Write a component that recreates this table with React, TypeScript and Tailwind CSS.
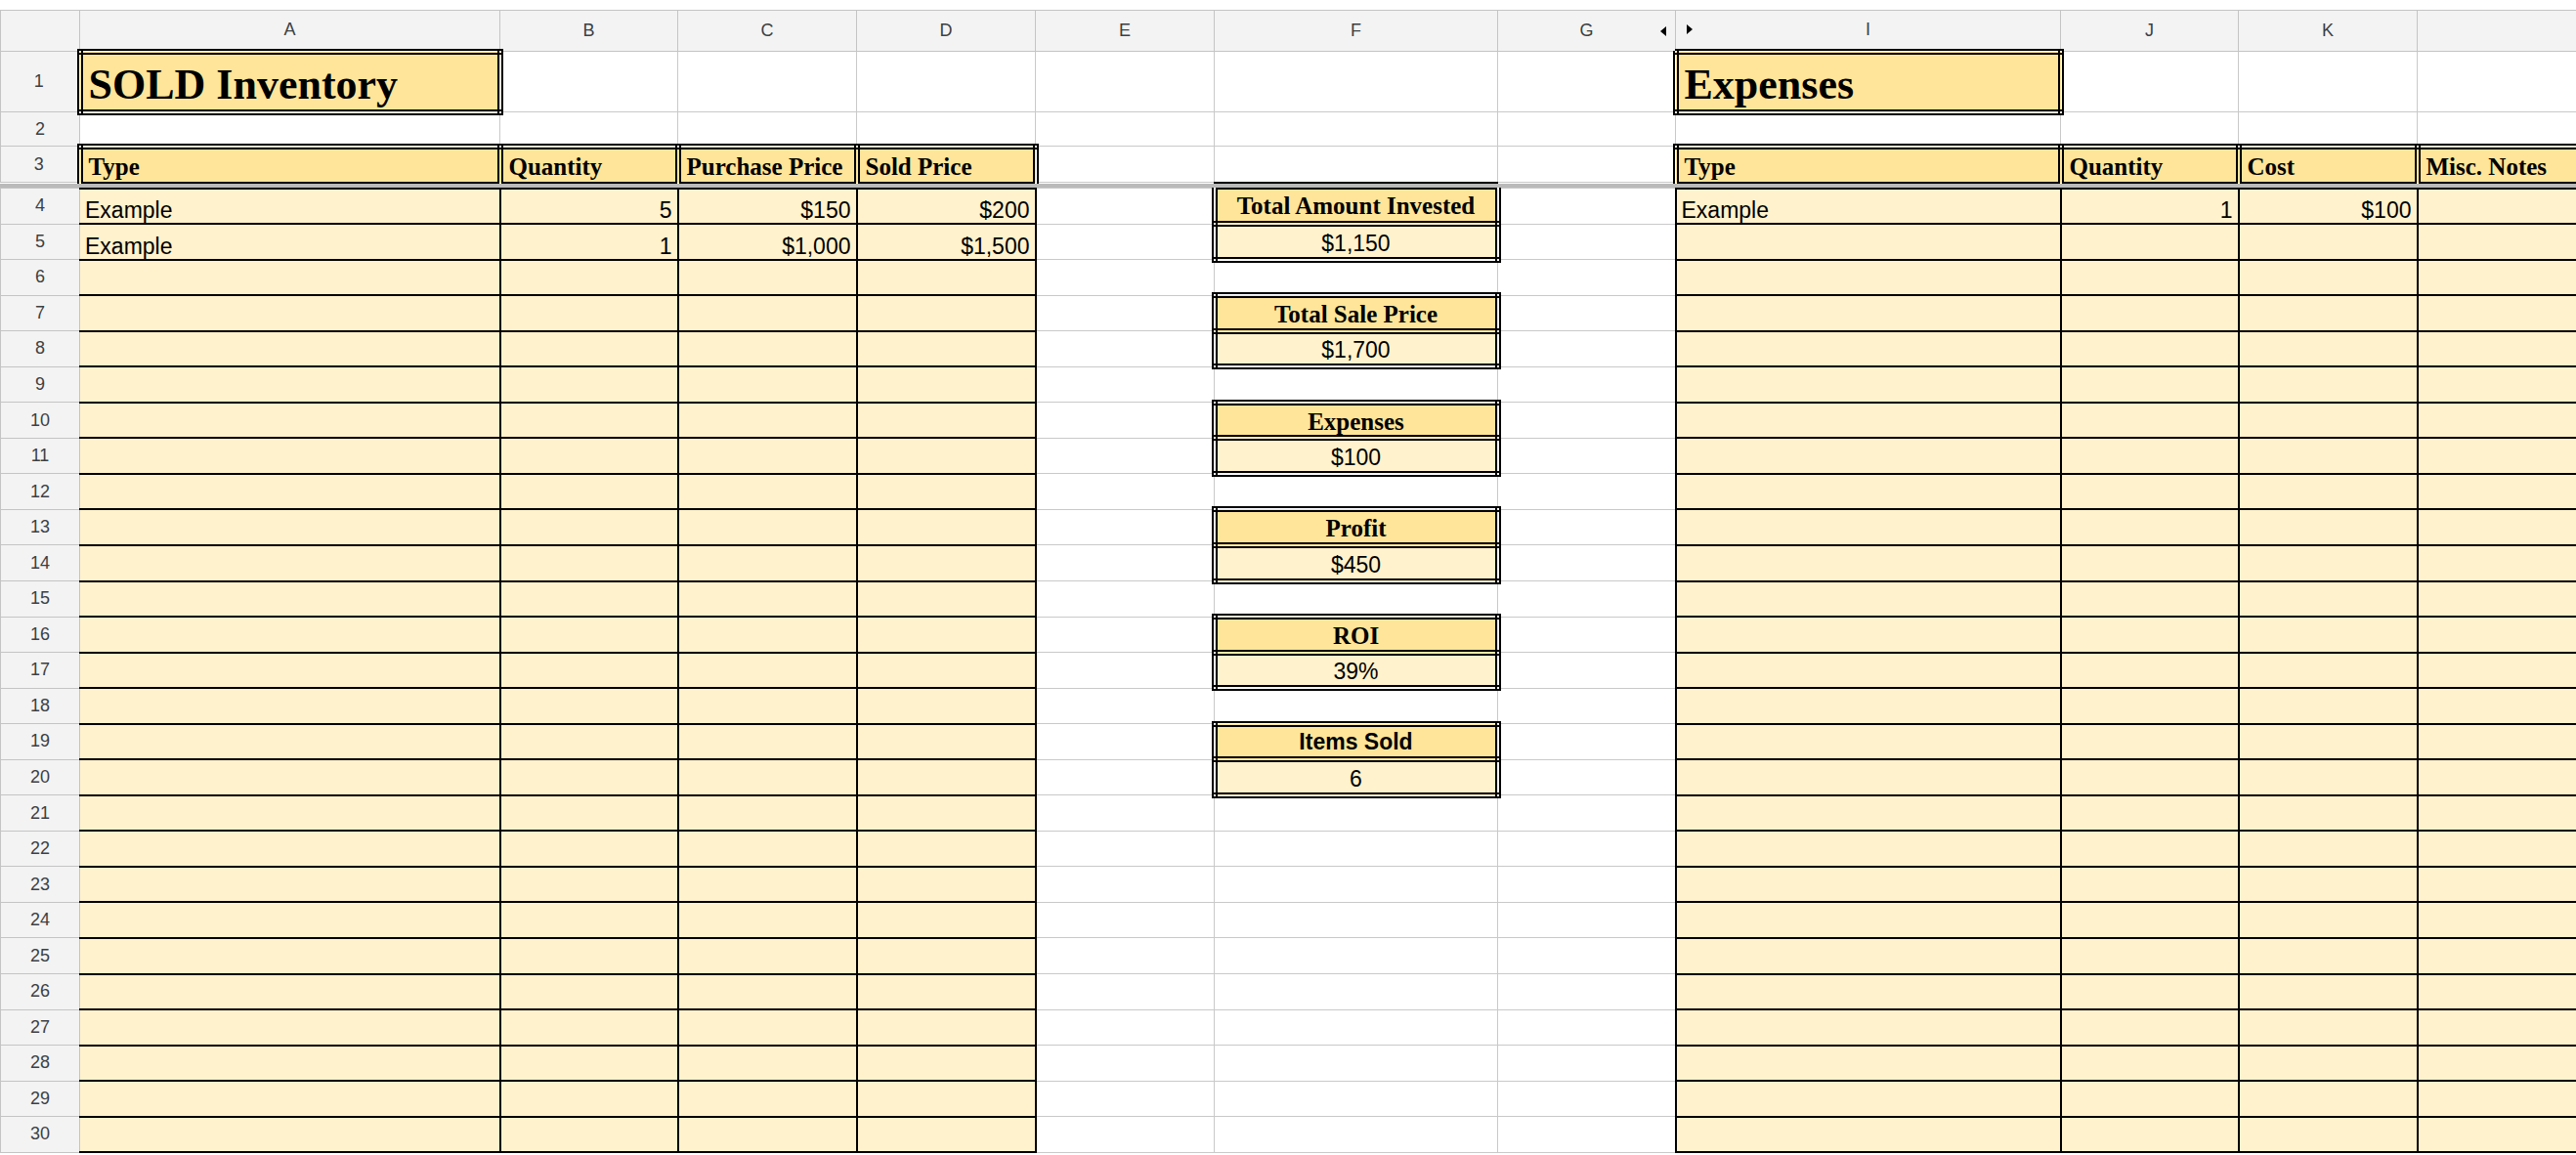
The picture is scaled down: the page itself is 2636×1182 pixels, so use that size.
import React from "react";

const serifBold = "font-['Liberation_Serif','Times_New_Roman',serif] font-bold";
const grid = "border border-[#c9c9c9] bg-white p-0";
const hdrCell =
  "border border-[#c4c4c4] bg-[#f3f3f3] p-0 text-center align-middle text-[18px] font-normal text-[#3c4043]";
const dbl = "border-[6px] border-double border-black";
const titleCell = `${dbl} bg-[#ffe599] pl-[6px] pb-[3px] align-bottom text-left text-[44px] leading-none text-black ${serifBold}`;
const headCell = `${dbl} border-b-2 [border-bottom-style:solid]! bg-[#ffe599] pl-[6px] pb-[3px] align-bottom text-left text-[25px] leading-none text-black ${serifBold}`;
const dataCell =
  "border-2 border-black bg-[#fff2cc] px-[5px] pb-[1px] align-bottom text-[23px] leading-none text-black";

type Row = { a?: string; b?: string; c?: string; d?: string; i?: string; j?: string; k?: string };

const inventory: Record<number, Row> = {
  4: { a: "Example", b: "5", c: "$150", d: "$200", i: "Example", j: "1", k: "$100" },
  5: { a: "Example", b: "1", c: "$1,000", d: "$1,500" },
};

const stats = [
  { row: 4, label: "Total Amount Invested", value: "$1,150" },
  { row: 7, label: "Total Sale Price", value: "$1,700" },
  { row: 10, label: "Expenses", value: "$100" },
  { row: 13, label: "Profit", value: "$450" },
  { row: 16, label: "ROI", value: "39%" },
  { row: 19, label: "Items Sold", value: "6", sans: true },
];

const rows = Array.from({ length: 27 }, (_, i) => i + 4);

function Cols() {
  return (
    <colgroup>
      <col className="w-[81px]" />
      <col className="w-[430px]" />
      <col className="w-[182px]" />
      <col className="w-[183px]" />
      <col className="w-[183px]" />
      <col className="w-[183px]" />
      <col className="w-[290px]" />
      <col className="w-[182px]" />
      <col className="w-[394px]" />
      <col className="w-[182px]" />
      <col className="w-[183px]" />
      <col className="w-[400px]" />
    </colgroup>
  );
}

function StatCell({ r }: { r: number }) {
  const label = stats.find((s) => s.row === r);
  const value = stats.find((s) => s.row + 1 === r);
  if (label) {
    return (
      <td
        className={`${dbl} ${r === 4 ? "border-t-2 [border-top-style:solid]!" : ""} bg-[#ffe599] p-0 pt-[2px] text-center align-middle leading-none text-black ${
          label.sans ? "text-[23px] font-bold" : `text-[25px] ${serifBold}`
        }`}
      >
        {label.label}
      </td>
    );
  }
  if (value) {
    return (
      <td className={`${dbl} bg-[#fff2cc] p-0 pt-[4px] text-center align-middle text-[23px] leading-none text-black`}>
        {value.value}
      </td>
    );
  }
  return <td className={grid} />;
}

export default function App() {
  return (
    <div className="h-[1182px] w-[2636px] overflow-hidden bg-white pt-[10px] font-['Liberation_Sans',Arial,sans-serif]">
      <table className="w-[2873px] table-fixed border-collapse">
        <Cols />
        <tbody>
          <tr className="h-[42px]">
            <th className={hdrCell} />
            {["A", "B", "C", "D", "E", "F"].map((c) => (
              <th key={c} className={hdrCell}>
                {c}
              </th>
            ))}
            <th className={`${hdrCell} relative`}>
              G
              <span className="absolute right-[9px] top-1/2 -translate-y-1/2 border-y-[5px] border-r-[6px] border-y-transparent border-r-black" />
            </th>
            <th className={`${hdrCell} relative`}>
              <span className="absolute left-[11px] top-1/2 -translate-y-1/2 border-y-[5px] border-l-[6px] border-y-transparent border-l-black" />
              I
            </th>
            <th className={hdrCell}>J</th>
            <th className={hdrCell}>K</th>
            <th className={hdrCell} />
          </tr>
          <tr className="h-[62px]">
            <td className={hdrCell}>1</td>
            <td className={titleCell}>SOLD Inventory</td>
            <td className={grid} />
            <td className={grid} />
            <td className={grid} />
            <td className={grid} />
            <td className={grid} />
            <td className={grid} />
            <td className={titleCell}>Expenses</td>
            <td className={grid} />
            <td className={grid} />
            <td className={grid} />
          </tr>
          <tr className="h-[35px]">
            <td className={hdrCell}>2</td>
            {Array.from({ length: 11 }, (_, i) => (
              <td key={i} className={grid} />
            ))}
          </tr>
          <tr className="h-[37px]">
            <td className={hdrCell}>3</td>
            <td className={headCell}>Type</td>
            <td className={headCell}>Quantity</td>
            <td className={headCell}>Purchase Price</td>
            <td className={headCell}>Sold Price</td>
            <td className={grid} />
            <td className={`${grid} border-b-2 border-b-black`} />
            <td className={grid} />
            <td className={headCell}>Type</td>
            <td className={headCell}>Quantity</td>
            <td className={headCell}>Cost</td>
            <td className={headCell}>Misc. Notes</td>
          </tr>
        </tbody>
      </table>

      <div className="h-[4px] w-full bg-[#bababa]" />

      <table className="w-[2873px] table-fixed border-collapse">
        <Cols />
        <tbody>
          {rows.map((r) => {
            const d = inventory[r] ?? {};
            return (
              <tr key={r} className="h-[36.55px]">
                <td className={hdrCell}>{r}</td>
                <td className={`${dataCell} border-l-0 text-left`}>{d.a}</td>
                <td className={`${dataCell} text-right`}>{d.b}</td>
                <td className={`${dataCell} text-right`}>{d.c}</td>
                <td className={`${dataCell} text-right`}>{d.d}</td>
                <td className={grid} />
                <StatCell r={r} />
                <td className={grid} />
                <td className={`${dataCell} text-left`}>{d.i}</td>
                <td className={`${dataCell} text-right`}>{d.j}</td>
                <td className={`${dataCell} text-right`}>{d.k}</td>
                <td className={dataCell} />
              </tr>
            );
          })}
        </tbody>
      </table>
    </div>
  );
}
